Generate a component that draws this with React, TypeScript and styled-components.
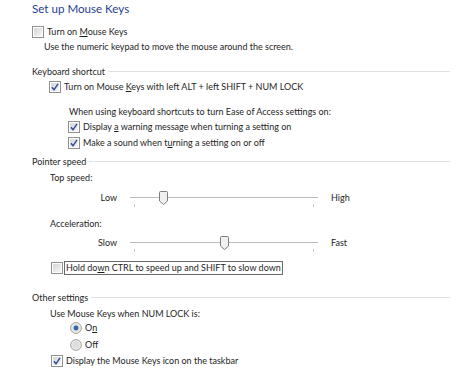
import React from 'react';
import styled, { createGlobalStyle } from 'styled-components';

const GlobalStyle = createGlobalStyle`
  html, body {
    margin: 0;
    padding: 0;
    background: #ffffff;
  }
  body {
    font-family: Lato, 'Open Sans', sans-serif;
    font-size: 9px;
    color: #1e1e1e;
  }
`;

const Page = styled.div`
  width: 474px;
  height: 375px;
  overflow: hidden;
  padding: 0 24px 0 32px;
  box-sizing: border-box;
`;

const Title = styled.h1`
  margin: 0;
  height: 18px;
  line-height: 18px;
  font-size: 11.6px;
  font-weight: 400;
  color: #1f3f92;
`;

const Row = styled.div<{ $top: number; $indent?: number }>`
  display: flex;
  align-items: center;
  height: 14px;
  margin-top: ${(p) => p.$top}px;
  padding-left: ${(p) => p.$indent ?? 0}px;
  white-space: nowrap;
`;

const Group = styled(Row)`
  gap: 3px;

  &::after {
    content: '';
    flex: 1;
    height: 1px;
    margin-top: 1px;
    background: #dde1e6;
  }
`;

const Label = styled.span<{ $focus?: boolean }>`
  margin-left: 1px;
  padding: 0 1px;
  line-height: 12px;
  border: 1px solid ${(p) => (p.$focus ? '#6a6a6a' : 'transparent')};
`;

const Box = styled.span`
  display: inline-flex;
  width: 12px;
  height: 12px;
  flex: none;
`;

const Check = ({ checked }: { checked?: boolean }) => (
  <Box>
    <svg width="12" height="12" viewBox="0 0 12 12">
      <defs>
        <linearGradient id="cbg" x1="0" y1="0" x2="1" y2="1">
          <stop offset="0" stopColor="#d6d6d6" />
          <stop offset="1" stopColor="#f6f6f6" />
        </linearGradient>
      </defs>
      <rect x="0.5" y="0.5" width="11" height="11" fill="#fff" stroke="#8e8f8f" />
      <rect x="2" y="2" width="8" height="8" fill="url(#cbg)" />
      {checked && (
        <path d="M3 6.2 L5 8.8 L9 2.8" fill="none" stroke="#2c4c9c" strokeWidth="1.5" />
      )}
    </svg>
  </Box>
);

const Radio = ({ checked }: { checked?: boolean }) => (
  <Box>
    <svg width="12" height="12" viewBox="0 0 12 12">
      <circle cx="6" cy="6" r="5.4" fill="#eeeeee" stroke="#a0a0a0" />
      <circle cx="6" cy="6" r="3.8" fill="#dedede" />
      {checked && <circle cx="6" cy="6" r="2.4" fill="#2f6aa6" />}
    </svg>
  </Box>
);

const SliderRow = styled.div<{ $top: number }>`
  display: grid;
  grid-template-columns: 98px 188px auto;
  align-items: center;
  height: 14px;
  margin-top: ${(p) => p.$top}px;
`;

const End = styled.span<{ $right?: boolean }>`
  text-align: ${(p) => (p.$right ? 'right' : 'left')};
  padding: ${(p) => (p.$right ? '0 13px 0 0' : '0 0 0 13px')};
`;

const Track = styled.div`
  position: relative;
  height: 14px;

  &::before {
    content: '';
    position: absolute;
    left: 0;
    right: 0;
    top: 7px;
    height: 1px;
    background: #bdbdbd;
  }
  &::after {
    content: '';
    position: absolute;
    left: 4px;
    right: 4px;
    top: 14px;
    height: 3px;
    border-left: 1px solid #c8c8c8;
    border-right: 1px solid #c8c8c8;
  }
`;

const Thumb = styled.span`
  position: absolute;
  top: 1px;
  width: 9px;
  height: 14px;
  margin-left: -4px;
`;

const Slider = ({ low, high, at, top }: { low: string; high: string; at: number; top: number }) => (
  <SliderRow $top={top}>
    <End $right>{low}</End>
    <Track>
      <Thumb style={{ left: `${at}px` }}>
        <svg width="9" height="14" viewBox="0 0 9 14">
          <path
            d="M0.5 1.5 Q0.5 0.5 1.5 0.5 L7.5 0.5 Q8.5 0.5 8.5 1.5 L8.5 10 L4.5 13.5 L0.5 10 Z"
            fill="#f0f0f0"
            stroke="#7d7d7d"
          />
        </svg>
      </Thumb>
    </Track>
    <End>{high}</End>
  </SliderRow>
);

export default function App() {
  return (
    <Page>
      <GlobalStyle />
      <Title>Set up Mouse Keys</Title>
      <Row $top={7}>
        <Check />
        <Label>
          Turn on <u>M</u>ouse Keys
        </Label>
      </Row>
      <Row $top={0} $indent={12}>Use the numeric keypad to move the mouse around the screen.</Row>
      <Group $top={11}>Keyboard shortcut</Group>
      <Row $top={2} $indent={17}>
        <Check checked />
        <Label>
          Turn on Mouse <u>K</u>eys with left ALT + left SHIFT + NUM LOCK
        </Label>
      </Row>
      <Row $top={10} $indent={37}>When using keyboard shortcuts to turn Ease of Access settings on:</Row>
      <Row $top={2} $indent={36}>
        <Check checked />
        <Label>
          Display <u>a</u> warning message when turning a setting on
        </Label>
      </Row>
      <Row $top={2} $indent={36}>
        <Check checked />
        <Label>
          Make a sound when t<u>u</u>rning a setting on or off
        </Label>
      </Row>
      <Group $top={4}>Pointer speed</Group>
      <Row $top={2} $indent={18}>Top speed:</Row>
      <Slider low="Low" high="High" at={33} top={6} />
      <Row $top={12} $indent={18}>Acceleration:</Row>
      <Slider low="Slow" high="Fast" at={94} top={5} />
      <Row $top={12} $indent={19}>
        <Check />
        <Label $focus>
          Hold do<u>w</u>n CTRL to speed up and SHIFT to slow down
        </Label>
      </Row>
      <Group $top={15}>Other settings</Group>
      <Row $top={2} $indent={18}>Use Mouse Keys when NUM LOCK is:</Row>
      <Row $top={1} $indent={38}>
        <Radio checked />
        <Label>
          O<u>n</u>
        </Label>
      </Row>
      <Row $top={3} $indent={38}>
        <Radio />
        <Label>Off</Label>
      </Row>
      <Row $top={2} $indent={19}>
        <Check checked />
        <Label>Display the Mouse Keys icon on the taskbar</Label>
      </Row>
    </Page>
  );
}
